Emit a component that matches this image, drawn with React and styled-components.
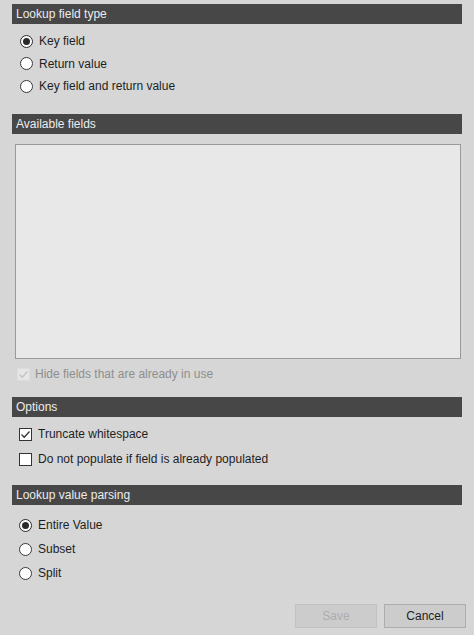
import React from 'react';
import styled, { createGlobalStyle } from 'styled-components';

const Global = createGlobalStyle`
  html, body {
    margin: 0;
    padding: 0;
    background: #d6d6d6;
  }
  body {
    font-family: "Liberation Sans", Arial, sans-serif;
    font-size: 12px;
    color: #1e1e1e;
  }
`;

const Panel = styled.div`
  width: 474px;
  height: 635px;
  box-sizing: border-box;
  padding: 4px 12px 0 12px;
  background: #d6d6d6;
  display: flex;
  flex-direction: column;
`;

const Header = styled.div`
  height: 20px;
  background: #474747;
  color: #ececec;
  display: flex;
  align-items: center;
  padding-left: 4px;
  margin-top: ${p => p.$top || 0}px;
`;

const Group = styled.div`
  display: flex;
  flex-direction: column;
  gap: ${p => p.$gap || 0}px;
  padding-left: ${p => p.$indent || 7}px;
  margin-top: ${p => p.$top || 0}px;
`;

const Row = styled.label`
  height: ${p => p.$h || 22}px;
  display: flex;
  align-items: center;
  gap: ${p => p.$gap || 6}px;
  color: ${p => (p.$disabled ? '#8e8e8e' : '#1e1e1e')};
`;

const Radio = styled.span`
  width: 13px;
  height: 13px;
  box-sizing: border-box;
  border-radius: 50%;
  border: ${p => (p.$on ? '1.5px solid #2a2a2a' : '1px solid #3a3a3a')};
  background: #fff;
  display: flex;
  align-items: center;
  justify-content: center;
  flex-shrink: 0;

  &::after {
    content: '';
    width: 7px;
    height: 7px;
    border-radius: 50%;
    background: ${p => (p.$on ? '#2a2a2a' : 'transparent')};
  }
`;

const Box = styled.span`
  width: 13px;
  height: 13px;
  box-sizing: border-box;
  border: 1px solid ${p => (p.$disabled ? '#dcdcdc' : '#333')};
  background: ${p => (p.$disabled ? '#e6e6e6' : '#fff')};
  display: flex;
  align-items: center;
  justify-content: center;
  flex-shrink: 0;
`;

const ListBox = styled.div`
  margin: 10px 1px 0 3px;
  height: 213px;
  background: #e8e8e8;
  border: 1px solid #9a9a9a;
`;

const Footer = styled.div`
  margin-top: auto;
  margin-bottom: 7px;
  display: flex;
  justify-content: flex-end;
  gap: 7px;
  margin-right: -4px;
`;

const Button = styled.button`
  width: 82px;
  height: 24px;
  font-family: inherit;
  font-size: 12px;
  background: #cccccc;
  border: 1px solid ${p => (p.disabled ? '#c2c2c2' : '#adadad')};
  color: ${p => (p.disabled ? '#acacac' : '#1e1e1e')};
  padding: 0;
`;

const Check = ({ color }) => (
  <svg width="11" height="11" viewBox="0 0 11 11">
    <path d="M1.5 5.5 L4.2 8.2 L9.5 2.5" fill="none" stroke={color} strokeWidth="1.3" />
  </svg>
);

const RadioRow = ({ on, label, h }) => (
  <Row $h={h}>
    <Radio $on={on} />
    {label}
  </Row>
);

const CheckRow = ({ on, disabled, label, h }) => (
  <Row $h={h} $disabled={disabled} $gap={disabled ? 5 : 6}>
    <Box $disabled={disabled}>{on && <Check color={disabled ? '#c4c4c4' : '#333'} />}</Box>
    {label}
  </Row>
);

export default function App() {
  return (
    <>
      <Global />
      <Panel>
        <Header>Lookup field type</Header>
        <Group $top={6} $indent={8}>
          <RadioRow on label="Key field" />
          <RadioRow label="Return value" h={23} />
          <RadioRow label="Key field and return value" />
        </Group>

        <Header $top={17}>Available fields</Header>
        <ListBox />
        <Group $top={4} $indent={5}>
          <CheckRow on disabled label="Hide fields that are already in use" />
        </Group>

        <Header $top={12}>Options</Header>
        <Group $top={6} $indent={7} $gap={3}>
          <CheckRow on label="Truncate whitespace" />
          <CheckRow label="Do not populate if field is already populated" />
        </Group>

        <Header $top={15}>Lookup value parsing</Header>
        <Group $top={9} $indent={7} $gap={2}>
          <RadioRow on label="Entire Value" />
          <RadioRow label="Subset" />
          <RadioRow label="Split" />
        </Group>

        <Footer>
          <Button disabled>Save</Button>
          <Button>Cancel</Button>
        </Footer>
      </Panel>
    </>
  );
}
